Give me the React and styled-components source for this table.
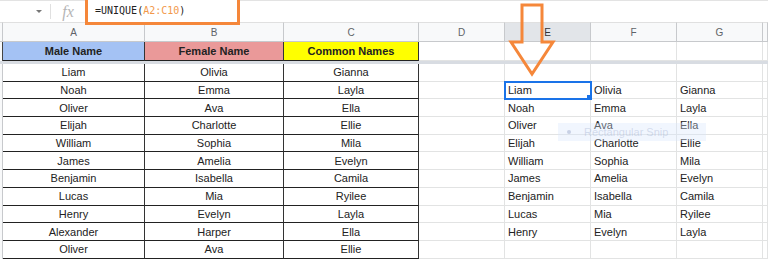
import styled, { createGlobalStyle } from "styled-components"

const Global = createGlobalStyle`
  html, body { margin:0; padding:0; background:#fff; }
  body { font-family: "Liberation Sans", Arial, sans-serif; }
`

const COLS = "3px 142px 139px 135px 86px 86px 86px 86px 1fr"
const ORANGE = "#f5873a"

const male = ["Liam","Noah","Oliver","Elijah","William","James","Benjamin","Lucas","Henry","Alexander","Oliver"]
const female = ["Olivia","Emma","Ava","Charlotte","Sophia","Amelia","Isabella","Mia","Evelyn","Harper","Ava"]
const common = ["Gianna","Layla","Ella","Ellie","Mila","Evelyn","Camila","Ryilee","Layla","Ella","Ellie"]

const Page = styled.div`
  position:relative;
  width:768px;
  height:261px;
  overflow:hidden;
  background:#fff;
`

const FormulaBar = styled.div`
  display:flex;
  height:21px;
  border-top:1px solid #e3e3e3;
  background:#fff;
`
const NameBox = styled.div`
  width:51px;
  display:flex;
  align-items:center;
  justify-content:flex-end;
  padding-right:8px;
  box-sizing:border-box;
  border-right:1px solid #e0e0e0;
  margin:3px 0;
`
const Caret = styled.span`
  width:0;
  height:0;
  border-left:3px solid transparent;
  border-right:3px solid transparent;
  border-top:3px solid #777;
`
const Fx = styled.div`
  width:34px;
  display:flex;
  align-items:center;
  justify-content:center;
  font-family:"Liberation Serif", serif;
  font-style:italic;
  font-size:16px;
  color:#b5b5b5;
`
const FormulaBox = styled.div`
  position:relative;
  z-index:3;
  width:155px;
  height:26px;
  margin-top:-2px;
  box-sizing:border-box;
  border:3px solid ${ORANGE};
  border-top:none;
  background:#fff;
  display:flex;
  align-items:center;
  padding-left:7px;
  font-family:"DejaVu Sans Mono", monospace;
  font-size:10px;
  color:#222;
`
const Ref = styled.span`
  color:#f2994a;
`

const Row = styled.div`
  display:grid;
  grid-template-columns:${COLS};
  height:${p => p.$h}px;
`

const ColHead = styled.div`
  display:flex;
  align-items:center;
  justify-content:center;
  box-sizing:border-box;
  background:${p => p.$active ? "#e2e5e9" : "#f8f9fa"};
  border-top:1px solid #e0e0e0;
  border-right:1px solid #c7c9cc;
  border-bottom:1px solid #c7c9cc;
  font-size:10px;
  color:${p => p.$active ? "#333" : "#5f6368"};
`

const Cell = styled.div`
  position:relative;
  display:flex;
  align-items:center;
  justify-content:${p => p.$left ? "flex-start" : "center"};
  padding-left:${p => p.$left ? "3px" : "0"};
  box-sizing:border-box;
  overflow:hidden;
  white-space:nowrap;
  font-size:11px;
  font-weight:${p => p.$bold ? 700 : 400};
  color:#222;
  background:${p => p.$bg || "#fff"};
  border-right:1px solid ${p => p.$dark ? "#333" : "#e2e3e3"};
  border-bottom:1px solid ${p => p.$dark ? "#222" : "#e2e3e3"};
  ${p => p.$selected && `
    outline:2px solid #1a73e8;
    outline-offset:-1px;
    z-index:1;
  `}
`
const Handle = styled.span`
  position:absolute;
  right:-3px;
  bottom:-3px;
  width:5px;
  height:5px;
  background:#1a73e8;
  border:1px solid #fff;
`
const Strip = styled.div`
  background:#f8f9fa;
  border-right:1px solid ${p => p.$dark ? "#444" : "#c7c9cc"};
`

const Freeze = styled.div`
  height:3px;
  background:#d8dce2;
`

const Snip = styled.div`
  position:absolute;
  left:558px;
  top:123px;
  width:148px;
  height:18px;
  display:flex;
  align-items:center;
  gap:13px;
  padding-left:9px;
  box-sizing:border-box;
  background:rgba(214,228,252,0.35);
  font-size:11px;
  color:rgba(150,165,200,0.35);
`
const Dot = styled.span`
  width:4px;
  height:4px;
  border-radius:50%;
  background:rgba(150,165,200,0.45);
`

const Arrow = styled.svg`
  position:absolute;
  left:0;
  top:0;
  z-index:4;
  pointer-events:none;
`

const letters = ["A","B","C","D","E","F","G",""]

const App = () => {
  const rows = male.map((m, i) => {
    const r = i >= 1 && i <= 9 ? i - 1 : -1
    return (
      <Row $h={17.7} key={i}>
        <Strip />
        <Cell $dark>{m}</Cell>
        <Cell $dark>{female[i]}</Cell>
        <Cell $dark>{common[i]}</Cell>
        <Cell />
        <Cell $left $selected={i === 1}>
          {r >= 0 ? male[r] : ""}
          {i === 1 && <Handle />}
        </Cell>
        <Cell $left>{r >= 0 ? female[r] : ""}</Cell>
        <Cell $left>{r >= 0 ? common[r] : ""}</Cell>
        <Cell />
      </Row>
    )
  })

  return (
    <Page>
      <Global />
      <FormulaBar>
        <NameBox><Caret /></NameBox>
        <Fx>fx</Fx>
        <FormulaBox>=UNIQUE(<Ref>A2:C10</Ref>)</FormulaBox>
      </FormulaBar>
      <Row $h={20}>
        <ColHead />
        {letters.map((l, i) => <ColHead key={i} $active={l === "E"}>{l}</ColHead>)}
      </Row>
      <Row $h={19}>
        <Strip $dark />
        <Cell $dark $bold $bg="#a4c2f4">Male Name</Cell>
        <Cell $dark $bold $bg="#ea9999">Female Name</Cell>
        <Cell $dark $bold $bg="#ffff00">Common Names</Cell>
        <Cell /><Cell /><Cell /><Cell /><Cell />
      </Row>
      <Freeze />
      {rows}
      <Snip><Dot />Rectangular Snip</Snip>
      <Arrow width="768" height="261" viewBox="0 0 768 261">
        <polygon
          points="522,5 542,5 542,42 553,42 532,74 511,42 522,42"
          fill="none"
          stroke={ORANGE}
          strokeWidth="3"
          strokeLinejoin="miter"
        />
      </Arrow>
    </Page>
  )
}

export default App
